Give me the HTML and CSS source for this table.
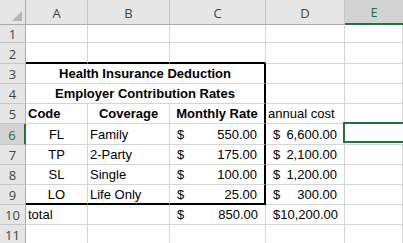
FILE: index.html
```html
<!DOCTYPE html>
<html>
<head>
<meta charset="utf-8">
<link rel="stylesheet" href="styles.css">
</head>
<body>
<div class="sheet">
  <div class="hd corner"><span class="tri"></span></div>
  <div class="hd col">A</div>
  <div class="hd col">B</div>
  <div class="hd col">C</div>
  <div class="hd col">D</div>
  <div class="hd col sel-col">E</div>

  <div class="hd rh">1</div>
  <div class="c"></div><div class="c"></div><div class="c"></div><div class="c"></div><div class="c"></div>

  <div class="hd rh">2</div>
  <div class="c tb"></div><div class="c tb"></div><div class="c tb"></div><div class="c"></div><div class="c"></div>

  <div class="hd rh">3</div>
  <div class="c span3 tr bold center">Health Insurance Deduction</div><div class="c"></div><div class="c"></div>

  <div class="hd rh">4</div>
  <div class="c span3 tr bold center">Employer Contribution Rates</div><div class="c"></div><div class="c"></div>

  <div class="hd rh">5</div>
  <div class="c bold">Code</div>
  <div class="c bold center">Coverage</div>
  <div class="c bold center tr">Monthly Rate</div>
  <div class="c">annual cost</div>
  <div class="c"></div>

  <div class="hd rh sel-row">6</div>
  <div class="c center">FL</div>
  <div class="c">Family</div>
  <div class="c acct tr"><span>$</span><span>550.00</span></div>
  <div class="c acct"><span>$</span><span>6,600.00</span></div>
  <div class="c active"></div>

  <div class="hd rh">7</div>
  <div class="c center">TP</div>
  <div class="c">2-Party</div>
  <div class="c acct tr"><span>$</span><span>175.00</span></div>
  <div class="c acct"><span>$</span><span>2,100.00</span></div>
  <div class="c"></div>

  <div class="hd rh">8</div>
  <div class="c center">SL</div>
  <div class="c">Single</div>
  <div class="c acct tr"><span>$</span><span>100.00</span></div>
  <div class="c acct"><span>$</span><span>1,200.00</span></div>
  <div class="c"></div>

  <div class="hd rh">9</div>
  <div class="c center tb">LO</div>
  <div class="c tb">Life Only</div>
  <div class="c acct tr tb"><span>$</span><span>25.00</span></div>
  <div class="c acct"><span>$</span><span>300.00</span></div>
  <div class="c"></div>

  <div class="hd rh">10</div>
  <div class="c">total</div>
  <div class="c"></div>
  <div class="c acct"><span>$</span><span>850.00</span></div>
  <div class="c acct"><span>$</span><span>10,200.00</span></div>
  <div class="c"></div>

  <div class="hd rh">11</div>
  <div class="c"></div><div class="c"></div><div class="c"></div><div class="c"></div><div class="c"></div>
</div>
</body>
</html>
```

FILE: styles.css
```css
html, body {
  margin: 0;
  padding: 0;
  background: #ffffff;
  overflow: hidden;
}

.sheet {
  display: grid;
  grid-template-columns: 26px 62px 82px 96px 79px 1fr;
  grid-template-rows: 25px 18px 21px 20px 20px 20px 21px 20px 20px 20px 20px 20px;
  width: 403px;
  height: 243px;
  overflow: hidden;
  font-family: "Liberation Sans", Arial, sans-serif;
  font-size: 13px;
  color: #000;
}

.sheet > div {
  box-sizing: border-box;
  min-width: 0;
  white-space: nowrap;
}

.hd {
  background: #e6e6e6;
  color: #444;
  font-family: "Open Sans", "Noto Sans", sans-serif;
  font-size: 13px;
  display: flex;
  align-items: center;
  justify-content: center;
  border-right: 1px solid #c6c6c6;
  border-bottom: 1px solid #c6c6c6;
}

.col {
  border-bottom: 1px solid #ababab;
  padding-top: 1px;
}

.rh {
  border-right: 1px solid #ababab;
  padding-top: 1px;
}

.corner {
  position: relative;
  border-bottom: 1px solid #ababab;
  border-right: 1px solid #ababab;
}

.tri {
  position: absolute;
  right: 3px;
  bottom: 3px;
  width: 0;
  height: 0;
  border-left: 10px solid transparent;
  border-bottom: 10px solid #b4b4b4;
}

.sel-col {
  background: #d2d2d2;
  color: #217346;
  border-right: none;
  border-bottom: 2px solid #217346;
}

.sel-row {
  background: #d2d2d2;
  color: #217346;
  border-right: 2px solid #217346;
}

.c {
  border-right: 1px solid #d4d4d4;
  border-bottom: 1px solid #d4d4d4;
  padding: 0 2px;
  display: flex;
  align-items: center;
  line-height: 19px;
}

.span3 {
  grid-column: span 3;
}

.bold {
  font-weight: bold;
}

.center {
  justify-content: center;
}

.acct {
  justify-content: space-between;
  padding: 0 7px;
}

.tb {
  border-bottom: 2px solid #000;
}

.tr {
  border-right: 2px solid #000;
}

.active {
  position: relative;
  border-right: none;
}

.active::after {
  content: "";
  position: absolute;
  left: -2px;
  top: -2px;
  bottom: 1px;
  right: 0;
  border: 2px solid #217346;
  border-right: none;
}
```
